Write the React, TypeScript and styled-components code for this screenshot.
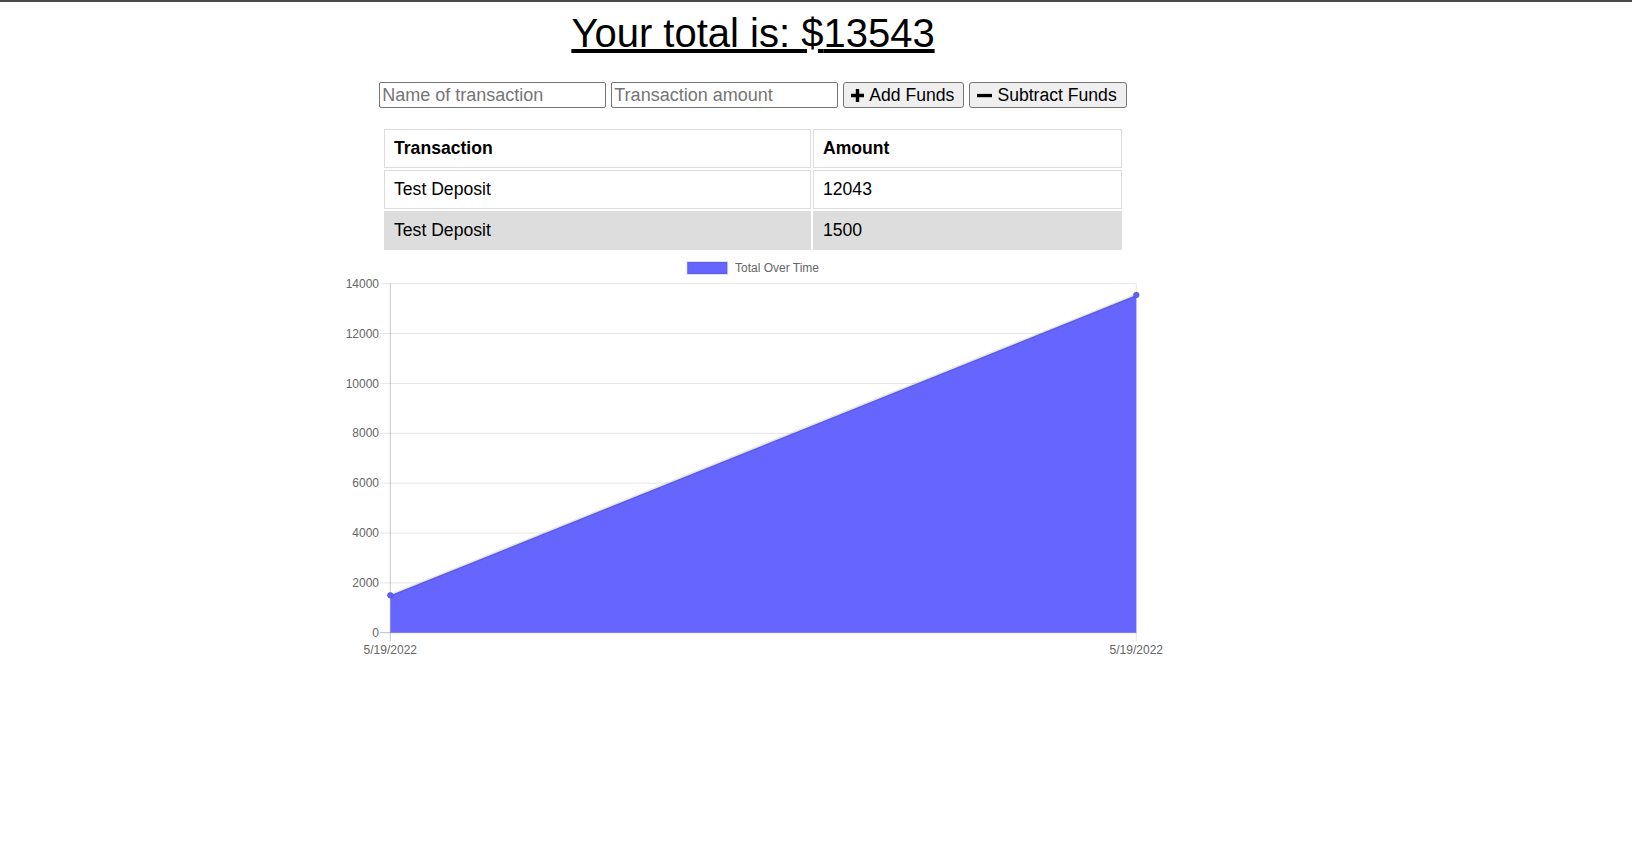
import React from "react";
import styled, { createGlobalStyle } from "styled-components";

const GlobalStyle = createGlobalStyle`
  html, body {
    margin: 0;
    padding: 0;
    background: #fff;
  }
  body {
    border-top: 2px solid #4a4a4a;
    font-family: "Liberation Sans", Arial, sans-serif;
    color: #000;
  }
`;

const Page = styled.main`
  box-sizing: border-box;
  width: 1506px;
  min-height: 858px;
  display: flex;
  flex-direction: column;
  align-items: center;
`;

const Total = styled.h1`
  margin: 8px 0 0;
  font-size: 40px;
  font-weight: normal;
  line-height: 46px;
  text-decoration: underline;
`;

const Form = styled.div`
  display: flex;
  gap: 5px;
  margin-top: 26px;
`;

const Field = styled.input`
  box-sizing: border-box;
  width: 227px;
  height: 26px;
  padding: 1px 2px;
  border: 1px solid #767676;
  border-radius: 2px;
  font: 18px "Liberation Sans", Arial, sans-serif;
  color: #000;
  outline: none;

  &::placeholder {
    color: #757575;
  }
`;

const ActionButton = styled.button`
  box-sizing: border-box;
  display: inline-flex;
  align-items: center;
  height: 26px;
  padding: 0 9px 0 7px;
  border: 1px solid #767676;
  border-radius: 3px;
  background: #efefef;
  font: 17.6px "Liberation Sans", Arial, sans-serif;
  color: #000;
  cursor: pointer;
`;

const Glyph = styled.svg`
  flex: none;
  margin-right: 5px;
`;

const Ledger = styled.table`
  margin-top: 19px;
  border-spacing: 2px;
  font-size: 17.6px;
`;

const HeadCell = styled.th<{ $width: number }>`
  box-sizing: border-box;
  width: ${(p) => p.$width}px;
  padding: 8px 9px;
  border: 1px solid #ddd;
  line-height: 21px;
  text-align: left;
  font-weight: bold;
`;

const Row = styled.tr`
  &:nth-child(even) {
    background: #ddd;
  }
`;

const Cell = styled.td`
  padding: 8px 9px;
  border: 1px solid #ddd;
  line-height: 21px;
  text-align: left;
`;

const ChartSvg = styled.svg`
  display: block;
  font-family: "Liberation Sans", Arial, sans-serif;
  font-size: 12px;
`;

const transactions = [
  { name: "Test Deposit", value: 12043 },
  { name: "Test Deposit", value: 1500 },
];

const series = [
  { label: "5/19/2022", total: 1500 },
  { label: "5/19/2022", total: 13543 },
];

// plot geometry in svg units
const W = 860;
const H = 412;
const X0 = 67.3;
const X1 = 813.3;
const TOP = 31.7;
const BOTTOM = 380.7;
const MAX = 14000;
const yOf = (v: number) => BOTTOM - (v / MAX) * (BOTTOM - TOP);
const ticks = [0, 2000, 4000, 6000, 8000, 10000, 12000, 14000];

const TotalChart = () => {
  const xs = [X0, X1];
  const pts = series.map((s, i) => ({ x: xs[i], y: yOf(s.total) }));
  return (
    <ChartSvg width={W} height={H} viewBox={`0 0 ${W} ${H}`}>
      <rect x={364.3} y={10} width={40} height={12} fill="#6666ff" stroke="rgba(0,0,0,0.1)" strokeWidth={2} />
      <text x={412} y={20.3} fill="#666">
        Total Over Time
      </text>

      {ticks.map((t) => (
        <g key={t}>
          <line
            x1={57}
            x2={X1}
            y1={yOf(t)}
            y2={yOf(t)}
            stroke={t === 0 ? "rgba(0,0,0,0.25)" : "rgba(0,0,0,0.1)"}
            strokeWidth={1}
          />
          <text x={56} y={yOf(t) + 4.2} fill="#666" textAnchor="end">
            {t}
          </text>
        </g>
      ))}

      {xs.map((x, i) => (
        <g key={i}>
          <line
            x1={x}
            x2={x}
            y1={TOP}
            y2={BOTTOM + 9}
            stroke={i === 0 ? "rgba(0,0,0,0.22)" : "rgba(0,0,0,0.1)"}
            strokeWidth={1}
          />
          <text x={x} y={402.3} fill="#666" textAnchor="middle">
            {series[i].label}
          </text>
        </g>
      ))}

      <polygon
        points={`${pts[0].x},${pts[0].y} ${pts[1].x},${pts[1].y} ${X1},${BOTTOM} ${X0},${BOTTOM}`}
        fill="#6666ff"
      />
      <line
        x1={pts[0].x}
        y1={pts[0].y}
        x2={pts[1].x}
        y2={pts[1].y}
        stroke="rgba(0,0,0,0.1)"
        strokeWidth={3}
      />
      {pts.map((p, i) => (
        <circle key={i} cx={p.x} cy={p.y} r={3} fill="#6060f6" stroke="rgba(0,0,0,0.1)" strokeWidth={1} />
      ))}
    </ChartSvg>
  );
};

export default function App() {
  const total = transactions.reduce((sum, t) => sum + t.value, 0);
  return (
    <>
      <GlobalStyle />
      <Page>
        <Total>Your total is: ${total}</Total>
        <Form>
          <Field type="text" placeholder="Name of transaction" />
          <Field type="number" placeholder="Transaction amount" />
          <ActionButton>
            <Glyph width="13" height="13" viewBox="0 0 13 13">
              <path d="M4.8 0h3.4v4.8H13v3.4H8.2V13H4.8V8.2H0V4.8h4.8z" fill="#000" />
            </Glyph>
            Add Funds
          </ActionButton>
          <ActionButton>
            <Glyph width="15" height="13" viewBox="0 0 15 13">
              <rect x="0" y="4.9" width="15" height="3.3" fill="#000" />
            </Glyph>
            Subtract Funds
          </ActionButton>
        </Form>
        <Ledger>
          <thead>
            <tr>
              <HeadCell $width={427}>Transaction</HeadCell>
              <HeadCell $width={309}>Amount</HeadCell>
            </tr>
          </thead>
          <tbody>
            {transactions.map((t, i) => (
              <Row key={i}>
                <Cell>{t.name}</Cell>
                <Cell>{t.value}</Cell>
              </Row>
            ))}
          </tbody>
        </Ledger>
        <TotalChart />
      </Page>
    </>
  );
}
